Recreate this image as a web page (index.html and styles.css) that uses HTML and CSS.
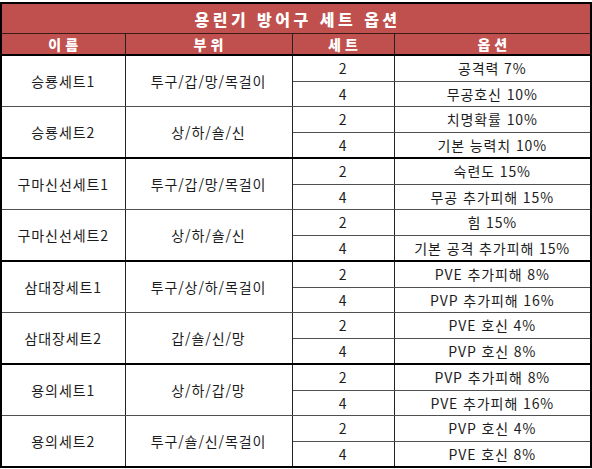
FILE: index.html
```html
<!DOCTYPE html>
<html lang="ko">
<head>
<meta charset="utf-8">
<title>용린기 방어구 세트 옵션</title>
<link rel="stylesheet" href="styles.css">
</head>
<body>
<table class="sets">
  <colgroup>
    <col class="c-name"><col class="c-part"><col class="c-count"><col class="c-opt">
  </colgroup>
  <thead>
    <tr class="title-row"><th colspan="4">용린기 방어구 세트 옵션</th></tr>
    <tr class="head-row"><th>이름</th><th>부위</th><th>세트</th><th>옵션</th></tr>
  </thead>
  <tbody class="group">
    <tr><td rowspan="2">승룡세트1</td><td rowspan="2">투구/갑/망/목걸이</td><td>2</td><td>공격력 7%</td></tr>
    <tr><td>4</td><td>무공호신 10%</td></tr>
    <tr class="set-start"><td rowspan="2">승룡세트2</td><td rowspan="2">상/하/숄/신</td><td>2</td><td>치명확률 10%</td></tr>
    <tr><td>4</td><td>기본 능력치 10%</td></tr>
  </tbody>
  <tbody class="group">
    <tr><td rowspan="2">구마신선세트1</td><td rowspan="2">투구/갑/망/목걸이</td><td>2</td><td>숙련도 15%</td></tr>
    <tr><td>4</td><td>무공 추가피해 15%</td></tr>
    <tr class="set-start"><td rowspan="2">구마신선세트2</td><td rowspan="2">상/하/숄/신</td><td>2</td><td>힘 15%</td></tr>
    <tr><td>4</td><td>기본 공격 추가피해 15%</td></tr>
  </tbody>
  <tbody class="group">
    <tr><td rowspan="2">삼대장세트1</td><td rowspan="2">투구/상/하/목걸이</td><td>2</td><td>PVE 추가피해 8%</td></tr>
    <tr><td>4</td><td>PVP 추가피해 16%</td></tr>
    <tr class="set-start"><td rowspan="2">삼대장세트2</td><td rowspan="2">갑/숄/신/망</td><td>2</td><td>PVE 호신 4%</td></tr>
    <tr><td>4</td><td>PVP 호신 8%</td></tr>
  </tbody>
  <tbody class="group">
    <tr><td rowspan="2">용의세트1</td><td rowspan="2">상/하/갑/망</td><td>2</td><td>PVP 추가피해 8%</td></tr>
    <tr><td>4</td><td>PVE 추가피해 16%</td></tr>
    <tr class="set-start"><td rowspan="2">용의세트2</td><td rowspan="2">투구/숄/신/목걸이</td><td>2</td><td>PVP 호신 4%</td></tr>
    <tr><td>4</td><td>PVE 호신 8%</td></tr>
  </tbody>
</table>
</body>
</html>
```
FILE: styles.css
```css
html, body {
  margin: 0;
  padding: 0;
  background: #ffffff;
}

body {
  padding-top: 2px;
  font-family: "Noto Sans CJK KR", "Noto Sans", sans-serif;
  color: #1c1c1c;
}

.sets {
  border-collapse: collapse;
  table-layout: fixed;
  width: 590px;
  border: 2px solid #000;
}

.c-name { width: 124px; }
.c-part { width: 167px; }
.c-count { width: 102px; }
.c-opt { width: 197px; }

.sets th,
.sets td {
  padding: 0;
  text-align: center;
  vertical-align: middle;
  white-space: nowrap;
  overflow: hidden;
}

.title-row th {
  height: 29px;
  line-height: 18px;
  padding-left: 3px;
  background: #c0504d;
  color: #fff;
  font-size: 16px;
  font-weight: 900;
  letter-spacing: 3.5px;
  border-bottom: 1px solid #3a1a18;
}

.head-row th {
  height: 20px;
  line-height: 18px;
  padding-left: 4px;
  background: #c0504d;
  color: #fff;
  font-size: 14px;
  font-weight: 900;
  letter-spacing: 4px;
  border-left: 1px solid #222;
  border-bottom: 2px solid #000;
}

.sets td {
  height: 24.5px;
  line-height: 18px;
  font-size: 14px;
  letter-spacing: 0.9px;
  border: 1px solid #505050;
  border-left-color: #222;
  border-right-color: #222;
}

.group tr:first-child td {
  border-top: 2px solid #000;
}

.set-start td {
  border-top: 1px solid #3a3a3a;
}
```
